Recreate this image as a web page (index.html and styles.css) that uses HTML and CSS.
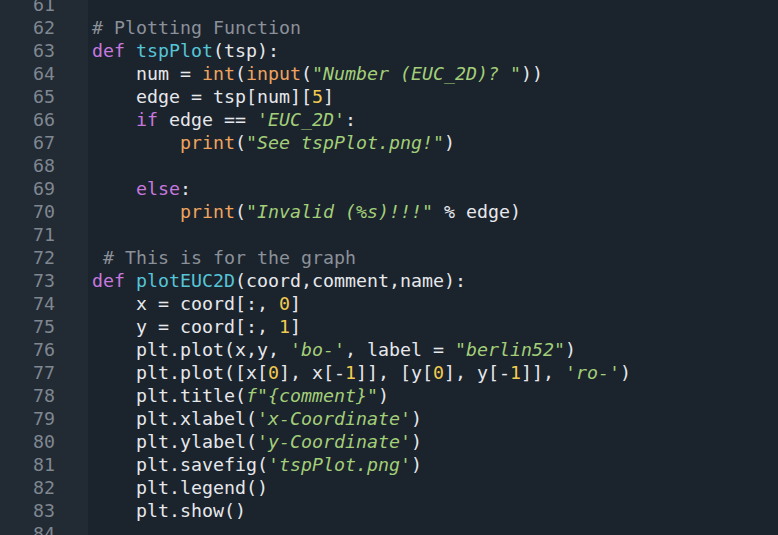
FILE: index.html
```html
<!DOCTYPE html>
<html>
<head>
<meta charset="utf-8">
<link rel="stylesheet" href="styles.css">
</head>
<body>
<div class="editor">
  <div class="gutter">
    <div class="ln">61</div><div class="ln">62</div><div class="ln">63</div><div class="ln">64</div><div class="ln">65</div><div class="ln">66</div><div class="ln">67</div><div class="ln">68</div><div class="ln">69</div><div class="ln">70</div><div class="ln">71</div><div class="ln">72</div><div class="ln">73</div><div class="ln">74</div><div class="ln">75</div><div class="ln">76</div><div class="ln">77</div><div class="ln">78</div><div class="ln">79</div><div class="ln">80</div><div class="ln">81</div><div class="ln">82</div><div class="ln">83</div><div class="ln">84</div>
  </div>
  <div class="code">
    <div class="line"> </div>
    <div class="line"><span class="c"># Plotting Function</span></div>
    <div class="line"><span class="k">def</span> <span class="fn">tspPlot</span>(tsp):</div>
    <div class="line">    num = <span class="b">int</span>(<span class="b">input</span>(<span class="s">"Number (EUC_2D)? "</span>))</div>
    <div class="line">    edge = tsp[num][<span class="n">5</span>]</div>
    <div class="line">    <span class="k">if</span> edge == <span class="s">'EUC_2D'</span>:</div>
    <div class="line">        <span class="b">print</span>(<span class="s">"See tspPlot.png!"</span>)</div>
    <div class="line"> </div>
    <div class="line">    <span class="k">else</span>:</div>
    <div class="line">        <span class="b">print</span>(<span class="s">"Invalid (%s)!!!"</span> % edge)</div>
    <div class="line"> </div>
    <div class="line"> <span class="c"># This is for the graph</span></div>
    <div class="line"><span class="k">def</span> <span class="fn">plotEUC2D</span>(coord,comment,name):</div>
    <div class="line">    x = coord[:, <span class="n">0</span>]</div>
    <div class="line">    y = coord[:, <span class="n">1</span>]</div>
    <div class="line">    plt.plot(x,y, <span class="s">'bo-'</span>, label = <span class="s">"berlin52"</span>)</div>
    <div class="line">    plt.plot([x[<span class="n">0</span>], x[-<span class="n">1</span>]], [y[<span class="n">0</span>], y[-<span class="n">1</span>]], <span class="s">'ro-'</span>)</div>
    <div class="line">    plt.title(<span class="s">f"{comment}"</span>)</div>
    <div class="line">    plt.xlabel(<span class="s">'x-Coordinate'</span>)</div>
    <div class="line">    plt.ylabel(<span class="s">'y-Coordinate'</span>)</div>
    <div class="line">    plt.savefig(<span class="s">'tspPlot.png'</span>)</div>
    <div class="line">    plt.legend()</div>
    <div class="line">    plt.show()</div>
    <div class="line"> </div>
  </div>
</div>
</body>
</html>
```
FILE: styles.css
```css
html, body {
  margin: 0;
  padding: 0;
  background: #1b232d;
  overflow: hidden;
  height: 100%;
}
.editor {
  display: flex;
  height: 535px;
  overflow: hidden;
  font-family: "DejaVu Sans Mono", "Liberation Mono", monospace;
  font-size: 18.27px;
  line-height: 23px;
}
.gutter {
  width: 88px;
  flex: none;
  background: #222a34;
  box-sizing: border-box;
  padding-right: 33px;
  margin-top: -7px;
  color: #7f8790;
  text-align: right;
}
.ln {
  height: 23px;
}
.code {
  flex: 1;
  padding-left: 4px;
  margin-top: -7px;
  color: #e6e8eb;
}
.line {
  height: 23px;
  white-space: pre;
}
.c { color: #8b9199; }
.k { color: #c678dd; }
.fn { color: #56c5d8; }
.b { color: #f0a35e; }
.s { color: #a3cf78; font-style: italic; }
.n { color: #f1cb4f; }
```
